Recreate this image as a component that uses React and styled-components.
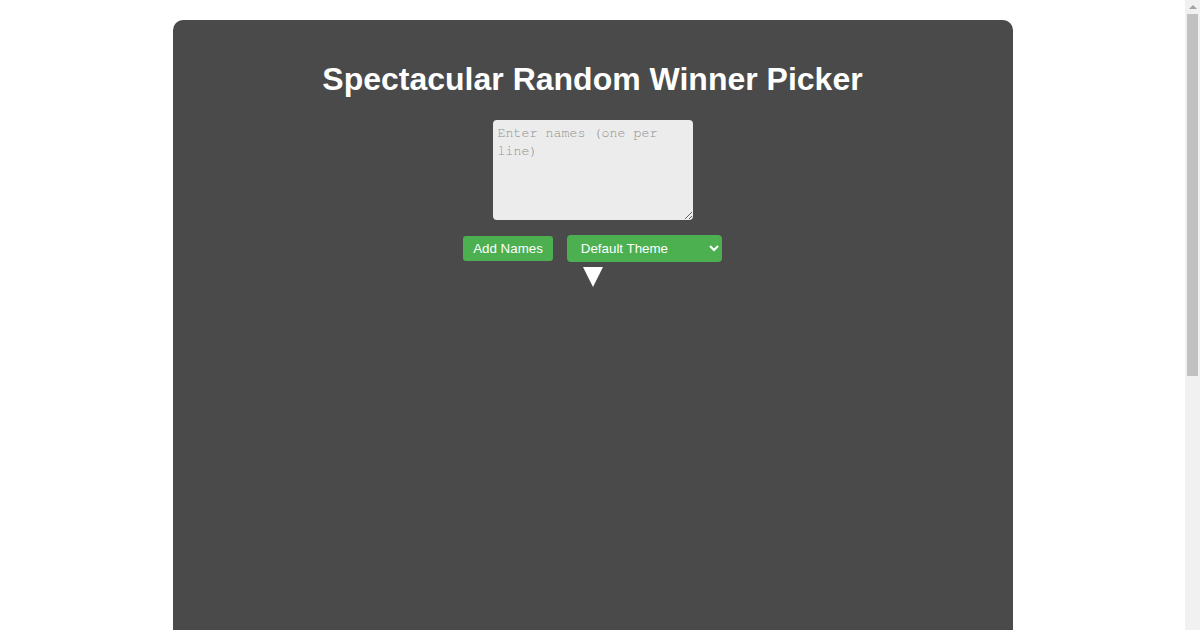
import React, { useState } from "react";
import styled, { createGlobalStyle } from "styled-components";

const GlobalStyle = createGlobalStyle`
  html, body {
    margin: 0;
    padding: 0;
    background: #ffffff;
    font-family: "Liberation Sans", Arial, sans-serif;
  }
  body {
    padding-right: 15px;
  }
`;

/* Classic page scrollbar drawn along the right edge of the window */
const ScrollTrack = styled.div`
  position: fixed;
  top: 0;
  right: 0;
  width: 15px;
  height: 100vh;
  background: #f1f1f1;
  display: flex;
  flex-direction: column;
  align-items: center;
`;

const ScrollArrow = styled.div`
  flex: 0 0 auto;
  width: 0;
  height: 0;
  margin: 5px 0 5px;
  border-left: 4px solid transparent;
  border-right: 4px solid transparent;
  border-bottom: 4px solid #a3a3a3;
`;

const ScrollThumb = styled.div`
  width: 11px;
  height: 362px;
  background: #c1c1c1;
`;

const Container = styled.div`
  max-width: 800px;
  margin: 20px auto;
  padding: 20px;
  background: #4a4a4a;
  border-radius: 10px;
  color: #ffffff;
  text-align: center;
`;

const Title = styled.h1`
  margin: 21px 0 22px;
  font-size: 32px;
  font-weight: bold;
  line-height: 37px;
  color: #ffffff;
`;

const NamesInput = styled.textarea`
  display: block;
  box-sizing: border-box;
  width: 200px;
  height: 100px;
  margin: 0 auto;
  padding: 4px 5px 5px;
  border: none;
  border-radius: 4px;
  background: #ececec;
  color: #333333;
  font-family: "Nimbus Mono PS", "Nimbus Mono L", FreeMono, Courier, "Liberation Mono", monospace;
  font-size: 13.33px;
  line-height: 18px;

  &::placeholder {
    color: #8f8f8f;
  }
`;

const Controls = styled.div`
  display: flex;
  justify-content: center;
  align-items: center;
  gap: 14px;
  margin-top: 15px;
`;

const GreenButton = styled.button`
  padding: 5px 10px;
  border: none;
  border-radius: 3px;
  background: #4caf50;
  color: #ffffff;
  font-family: "Liberation Sans", Arial, sans-serif;
  font-size: 13.33px;
  line-height: 15px;
  cursor: pointer;
`;

const ThemeSelect = styled.select`
  box-sizing: border-box;
  width: 155px;
  height: 27px;
  padding: 0 6px 0 10px;
  border: none;
  border-radius: 4px;
  background: #4caf50;
  color: #ffffff;
  font-family: "Liberation Sans", Arial, sans-serif;
  font-size: 13.33px;
`;

const Pointer = styled.div`
  width: 0;
  height: 0;
  margin: 5px auto 0;
  border-left: 10px solid transparent;
  border-right: 10px solid transparent;
  border-top: 20px solid #ffffff;
`;

const WheelArea = styled.canvas`
  display: block;
  width: 700px;
  height: 720px;
  margin: 0 auto;
`;

export default function App() {
  const [theme, setTheme] = useState("default");
  return (
    <>
      <GlobalStyle />
      <Container>
        <Title>Spectacular Random Winner Picker</Title>
        <NamesInput placeholder="Enter names (one per line)" />
        <Controls>
          <GreenButton>Add Names</GreenButton>
          <ThemeSelect value={theme} onChange={(e) => setTheme(e.target.value)}>
            <option value="default">Default Theme</option>
            <option value="neon">Neon Theme</option>
            <option value="pastel">Pastel Theme</option>
          </ThemeSelect>
        </Controls>
        <Pointer />
        <WheelArea />
      </Container>
      <ScrollTrack aria-hidden="true">
        <ScrollArrow />
        <ScrollThumb />
      </ScrollTrack>
    </>
  );
}
